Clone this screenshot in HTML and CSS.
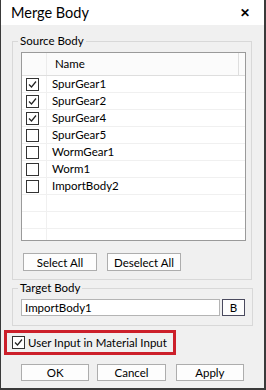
FILE: index.html
```html
<!DOCTYPE html>
<html>
<head>
    <title>Merge Body</title>
    <link rel="stylesheet" href="styles.css">
</head>
<body>
<div class="dialog">
    <div class="titlebar">
        <span class="title">Merge Body</span>
        <span class="close">&#x2715;</span>
    </div>

    <div class="content">
        <fieldset class="group source">
            <legend>Source Body</legend>
            <div class="list">
                <div class="list-head">
                    <span class="col-check"></span>
                    <span class="col-name">Name</span>
                </div>
                <div class="row">
                    <span class="col-check"><span class="box"><svg viewBox="0 0 11 11"><polyline points="2,5.5 4.5,8 9,2.5"/></svg></span></span>
                    <span class="col-name">SpurGear1</span>
                </div>
                <div class="row">
                    <span class="col-check"><span class="box"><svg viewBox="0 0 11 11"><polyline points="2,5.5 4.5,8 9,2.5"/></svg></span></span>
                    <span class="col-name">SpurGear2</span>
                </div>
                <div class="row">
                    <span class="col-check"><span class="box"><svg viewBox="0 0 11 11"><polyline points="2,5.5 4.5,8 9,2.5"/></svg></span></span>
                    <span class="col-name">SpurGear4</span>
                </div>
                <div class="row">
                    <span class="col-check"><span class="box"></span></span>
                    <span class="col-name">SpurGear5</span>
                </div>
                <div class="row">
                    <span class="col-check"><span class="box"></span></span>
                    <span class="col-name">WormGear1</span>
                </div>
                <div class="row">
                    <span class="col-check"><span class="box"></span></span>
                    <span class="col-name">Worm1</span>
                </div>
                <div class="row">
                    <span class="col-check"><span class="box"></span></span>
                    <span class="col-name">ImportBody2</span>
                </div>
                <div class="row"><span class="col-check"></span><span class="col-name"></span></div>
                <div class="row"><span class="col-check"></span><span class="col-name"></span></div>
                <div class="row"><span class="col-check"></span><span class="col-name"></span></div>
            </div>
            <div class="btn-row">
                <button class="btn wide">Select All</button>
                <button class="btn wide">Deselect All</button>
            </div>
        </fieldset>

        <fieldset class="group target">
            <legend>Target Body</legend>
            <div class="target-row">
                <div class="field">ImportBody1</div>
                <button class="btn pick">B</button>
            </div>
        </fieldset>

        <div class="highlight">
            <span class="box"><svg viewBox="0 0 11 11"><polyline points="2,5.5 4.5,8 9,2.5"/></svg></span>
            <span>User Input in Material Input</span>
        </div>

        <div class="actions">
            <button class="btn action">OK</button>
            <button class="btn action">Cancel</button>
            <button class="btn action">Apply</button>
        </div>
    </div>
</div>
</body>
</html>
```

FILE: styles.css
```css
body {
    margin: 0;
    background: #fff;
    font-family: Lato, "Noto Sans", sans-serif;
    font-size: 11.5px;
    color: #000;
}

.dialog {
    width: 266px;
    height: 390px;
    box-sizing: border-box;
    border-left: 1px solid #3a3a3a;
    border-right: 2px solid #3a3a3a;
    border-bottom: 2px solid #3a3a3a;
    background: #f0f0f0;
    display: flex;
    flex-direction: column;
    white-space: nowrap;
}

.titlebar {
    height: 25px;
    flex: none;
    background: #fff;
    display: flex;
    align-items: center;
    justify-content: space-between;
    padding: 0 14px 0 10px;
}

.title {
    font-size: 14.5px;
}

.close {
    font-size: 12px;
    font-weight: bold;
}

.content {
    padding: 8px 12px 0 11px;
}

.group {
    margin: 0;
    border: 1px solid #d8d8d8;
    padding: 3px 5px 8px 8px;
}

.group legend {
    padding: 0 2px;
    margin-left: -3px;
    line-height: 16px;
}

.list {
    height: 189px;
    box-sizing: border-box;
    border: 1px solid #9a9a9a;
    background: #fff;
    overflow: hidden;
}

.list-head {
    height: 22px;
    display: flex;
    align-items: center;
    border-bottom: 1px solid #dedede;
    background: #fbfbfb;
}

.list-head .col-check {
    align-self: stretch;
    border-right: 1px solid #ececec;
}

.list-head .col-name {
    width: 183px;
    padding-left: 8px;
    align-self: stretch;
    display: flex;
    align-items: center;
    border-right: 1px solid #dedede;
}

.row {
    height: 16px;
    display: flex;
    border-bottom: 1px solid #f0f0f0;
}

.col-check {
    width: 24px;
    flex: none;
    display: flex;
    align-items: center;
    border-right: 1px solid #f0f0f0;
}

.row .col-check .box {
    margin-left: 4px;
}

.col-name {
    padding-left: 5px;
    line-height: 16px;
}

.box {
    width: 13px;
    height: 13px;
    box-sizing: border-box;
    border: 1px solid #333;
    background: #fff;
    display: inline-flex;
    flex: none;
}

.box svg {
    width: 11px;
    height: 11px;
    fill: none;
    stroke: #222;
    stroke-width: 1.2;
}

.btn {
    font-family: inherit;
    font-size: 11.5px;
    color: #000;
    background: #fdfdfd;
    border: 1px solid #adadad;
    padding: 0;
    margin: 0;
}

.btn-row {
    display: flex;
    gap: 10px;
    margin-top: 12px;
    padding-left: 2px;
}

.btn.wide {
    width: 74px;
    height: 18px;
}

.group.target {
    padding: 3px 7px 9px 8px;
}

.target-row {
    display: flex;
    gap: 2px;
}

.field {
    width: 199px;
    height: 17px;
    box-sizing: border-box;
    border: 1px solid #b4b4b4;
    background: #fff;
    padding-left: 3px;
    line-height: 15px;
}

.btn.pick {
    width: 23px;
    height: 17px;
    border-color: #4a4a5e;
}

.highlight {
    width: 172px;
    height: 25px;
    box-sizing: border-box;
    margin: 4px 0 0 -8px;
    border: 3px solid #cc1f2a;
    display: flex;
    align-items: center;
    gap: 3px;
    padding-left: 5px;
}

.actions {
    display: flex;
    margin-top: 9px;
    padding-left: 9px;
}

.btn.action {
    width: 69px;
    height: 17px;
    margin-right: 8px;
}

.btn.action:last-child {
    margin-left: 2px;
}
```
